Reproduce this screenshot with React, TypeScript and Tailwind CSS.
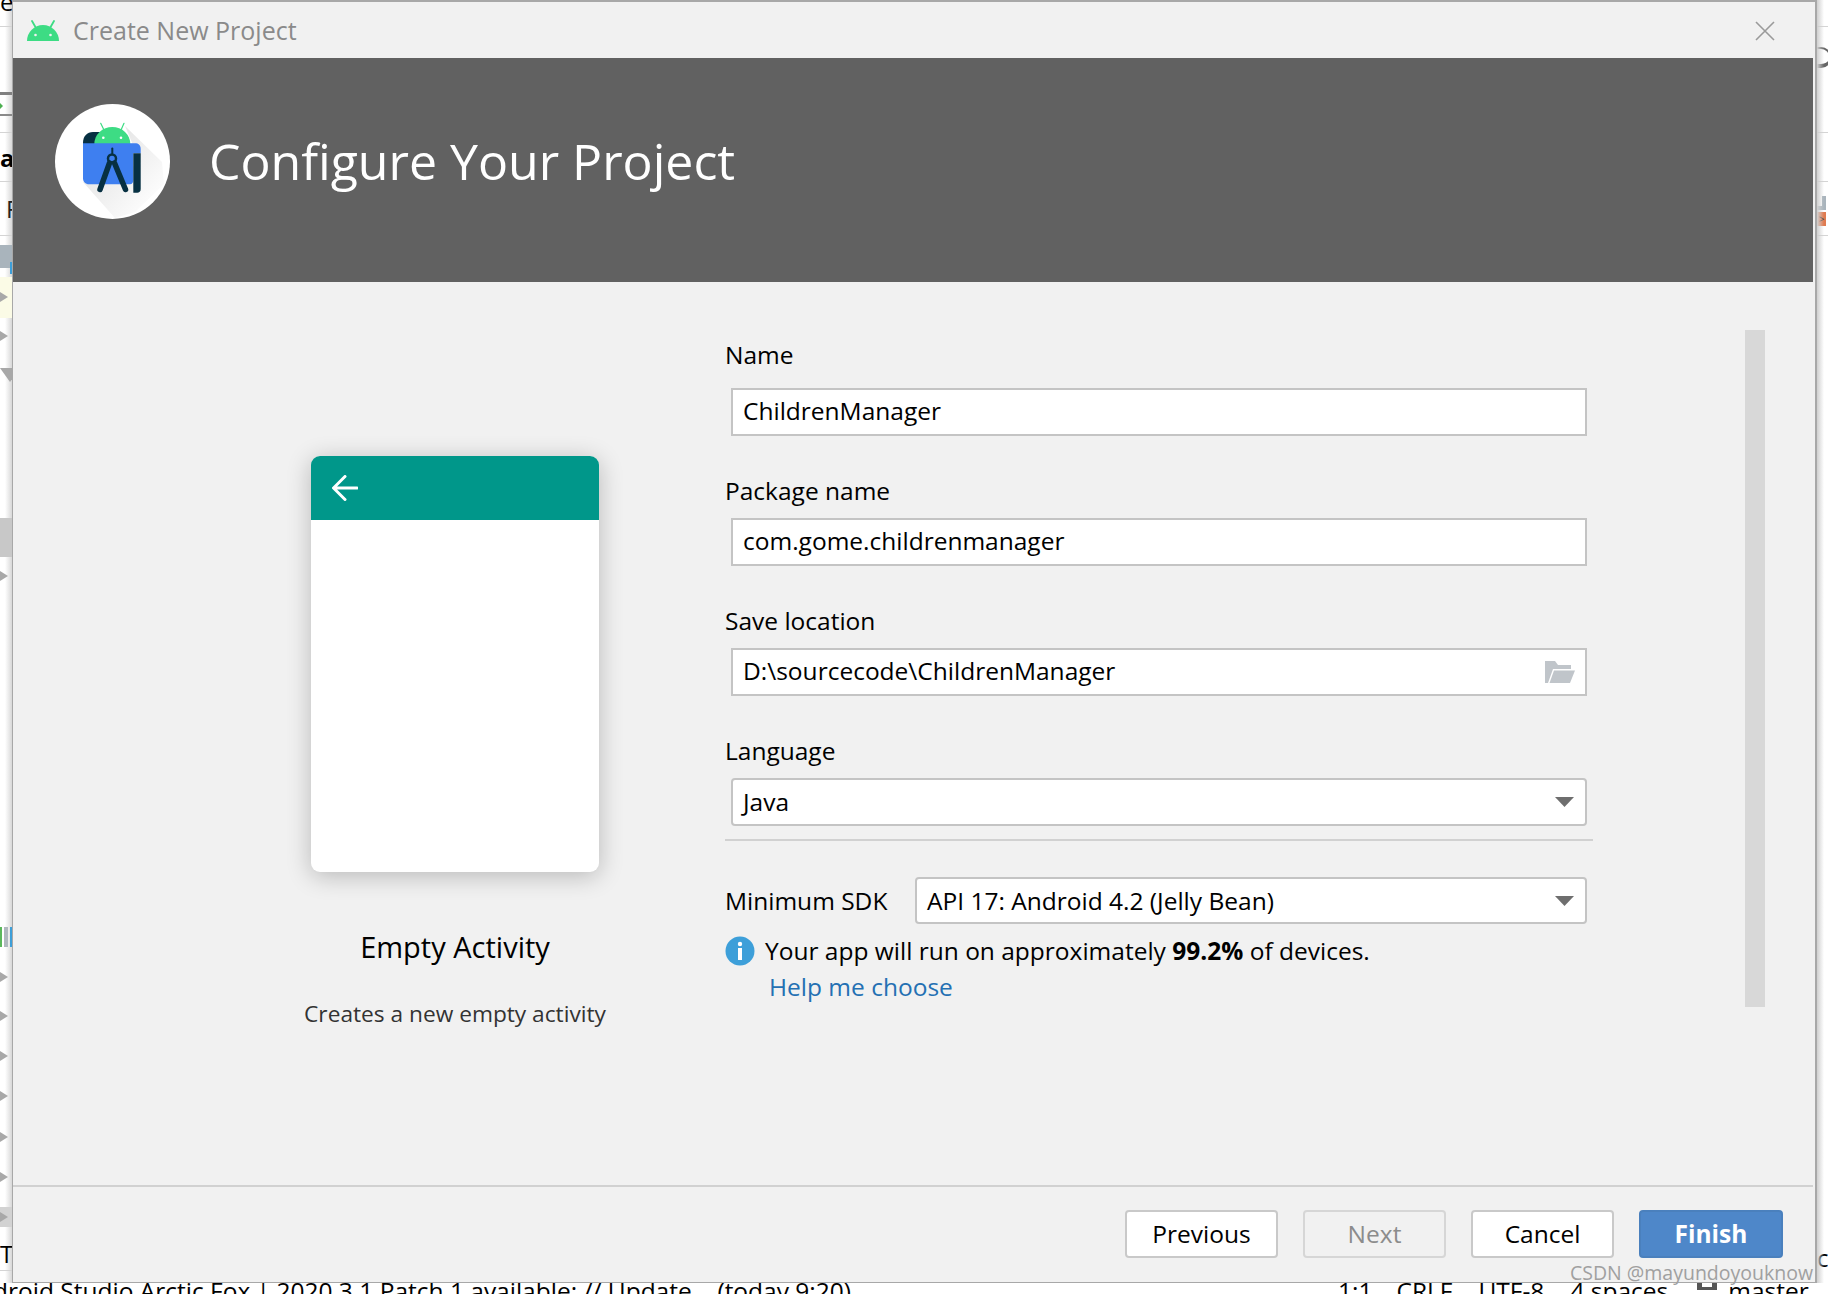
const font = "font-['Open_Sans','Noto_Sans',sans-serif]";

function AndroidHead() {
    return (
        <svg width="34" height="22" viewBox="0 0 34 22" className="shrink-0">
            <path d="M1 21a16 16 0 0 1 32 0z" fill="#3ddc84" />
            <path d="M6 1l4 7M28 1l-4 7" stroke="#3ddc84" strokeWidth="1.8" strokeLinecap="round" />
            <circle cx="9.5" cy="15" r="1.3" fill="#f1f1f1" />
            <circle cx="24.5" cy="15" r="1.3" fill="#f1f1f1" />
        </svg>
    );
}

function StudioLogo() {
    return (
        <svg width="115" height="115" viewBox="0 0 115 115" className="shrink-0">
            <defs>
                <linearGradient id="longShadow" x1="0.2" y1="0.2" x2="0.9" y2="0.9">
                    <stop offset="0" stopColor="#d8d8d8" />
                    <stop offset="1" stopColor="#ffffff" />
                </linearGradient>
            </defs>
            <circle cx="57.5" cy="57.5" r="57.5" fill="#ffffff" />
            <path d="M70 22L107 58L109 80L80 108L60 114L28 78L86 60z" fill="url(#longShadow)" opacity="0.7" />
            <path d="M28 39c0-7 4-11 10-11h10v14H28z" fill="#073042" />
            <path d="M39.3 40a18 17 0 0 1 36 0z" fill="#3ddc84" />
            <path d="M45.7 19.3l3.3 6.7M69 19.3l-3 6.7" stroke="#3ddc84" strokeWidth="1.2" strokeLinecap="round" />
            <circle cx="48.3" cy="33.7" r="1.3" fill="#ffffff" />
            <circle cx="66" cy="33.7" r="1.3" fill="#ffffff" />
            <path d="M28 39.3h52c3.500 0 5.700 2 5.700 5.500v4.500H78.300V76c0 2.500-1 4.300-3.500 4.300H34c-3.500 0-6-2.500-6-6z" fill="#3e7ff0" />
            <path d="M78.300 49.300h7.400V85c0 2.500-1.500 3.700-3.500 3.700h-3.900z" fill="#073042" />
            <path d="M57.300 44.500v5" stroke="#073042" strokeWidth="2" strokeLinecap="round" />
            <circle cx="57" cy="54.500" r="4" fill="none" stroke="#073042" strokeWidth="2.500" />
            <path d="M54.500 59L45 85.500M59.500 59L70.500 85.500" stroke="#073042" strokeWidth="5.500" strokeLinecap="round" />
        </svg>
    );
}

function Caret() {
    return (
        <svg width="19" height="10" viewBox="0 0 19 10" className="shrink-0">
            <path d="M0 0h19L9.500 10z" fill="#6e6e6e" />
        </svg>
    );
}

function Field({ label, value, first, icon }: { label: string; value: string; first?: boolean; icon?: boolean }) {
    return (
        <div>
            <div className={first ? 'h-[50px] leading-[34px] text-[24.5px] text-black' : 'box-content h-[44px] pt-[38px] leading-[34px] text-[24.5px] text-black'}>
                {label}
            </div>
            <div className="ml-[6px] flex h-[48px] w-[856px] items-center justify-between border-2 border-[#c4c4c4] bg-white px-[10px] pb-[1px] text-[24.5px] text-black">
                <span>{value}</span>
                {icon && (
                    <svg width="30" height="22" viewBox="0 0 30 22">
                        <path d="M0 0h10l3 4h13v4H8L3 22H0z" fill="#c0c5ca" />
                        <path d="M9 9.500h21L25 22H4.500z" fill="#c0c5ca" />
                    </svg>
                )}
            </div>
        </div>
    );
}

function Button({ label, kind }: { label: string; kind: 'previous' | 'cancel' | 'off' | 'primary' }) {
    const styles = {
        previous: 'w-[153px] border-[#c9c9c9] bg-white text-black',
        cancel: 'w-[143px] border-[#c9c9c9] bg-white text-black',
        off: 'w-[143px] border-[#d6d6d6] bg-[#f1f1f1] text-[#8c8c8c]',
        primary: 'w-[144px] border-[#4a80bd] bg-[#4e87c9] font-bold text-white',
    };
    return (
        <div className={`flex h-[48px] items-center justify-center rounded-[4px] border-2 text-[24.5px] ${styles[kind]}`}>
            {label}
        </div>
    );
}

function Tri({ top }: { top: string }) {
    return <div className={`absolute left-0 h-0 w-0 border-y-[5px] border-l-[8px] border-y-transparent border-l-[#a8a8a8] ${top}`} />;
}

function LeftStrip() {
    return (
        <div className="relative w-[12px] shrink-0 overflow-hidden bg-white text-black">
            <div className="absolute right-0 top-0 h-full w-[7px] bg-gradient-to-r from-transparent to-[#d8d8d8]" />
            <div className="absolute left-0 top-[-16px] text-[24px]">e</div>
            <div className="absolute left-0 top-[26px] h-px w-full bg-[#d4d4d4]" />
            <div className="absolute left-0 top-[92px] h-[3px] w-full bg-[#808080]" />
            <div className="absolute left-0 top-[103px] h-0 w-0 border-y-[3px] border-l-[3px] border-y-transparent border-l-[#4caf50]" />
            <div className="absolute left-0 top-[114px] h-[2px] w-full bg-[#8a8a8a]" />
            <div className="absolute left-0 top-[132px] h-px w-full bg-[#d4d4d4]" />
            <div className="absolute left-0 top-[140px] text-[24px] font-bold">a</div>
            <div className="absolute left-0 top-[181px] h-px w-full bg-[#d4d4d4]" />
            <div className="absolute left-[6px] top-[191px] text-[24px] text-[#222222]">F</div>
            <div className="absolute left-0 top-[235px] h-px w-full bg-[#d4d4d4]" />
            <div className="absolute left-0 top-[245px] h-[23px] w-full bg-[#a9b4bc]" />
            <div className="absolute left-[10px] top-[262px] h-[12px] w-[2px] bg-[#3d9fd9]" />
            <div className="absolute left-0 top-[277px] h-[41px] w-full bg-[#fbfbe6]" />
            <Tri top="top-[292px]" />
            <Tri top="top-[331px]" />
            <div className="absolute left-0 top-[368px] h-0 w-0 border-x-[10px] border-t-[14px] border-x-transparent border-t-[#a8a8a8]" />
            <div className="absolute left-0 top-[518px] h-[39px] w-full bg-[#c8c8c8]" />
            <Tri top="top-[571px]" />
            <div className="absolute left-0 top-[927px] h-[20px] w-[2px] bg-[#5cb85c]" />
            <div className="absolute left-[4px] top-[927px] h-[20px] w-[4px] bg-[#b0b8be]" />
            <div className="absolute left-[10px] top-[927px] h-[20px] w-[2px] bg-[#3d9fd9]" />
            <Tri top="top-[972px]" />
            <Tri top="top-[1011px]" />
            <Tri top="top-[1051px]" />
            <Tri top="top-[1091px]" />
            <Tri top="top-[1132px]" />
            <Tri top="top-[1172px]" />
            <div className="absolute left-0 top-[1207px] h-[20px] w-full bg-[#d2d2d2]" />
            <Tri top="top-[1212px]" />
            <div className="absolute left-0 top-[1236px] text-[24px]">T</div>
            <div className="absolute left-0 top-[1270px] h-px w-full bg-[#d4d4d4]" />
        </div>
    );
}

function RightStrip() {
    return (
        <div className="relative flex-1 overflow-hidden bg-white text-black">
            <div className="absolute left-0 top-[26px] h-px w-full bg-[#d4d4d4]" />
            <div className="absolute left-0 top-[132px] h-px w-full bg-[#d4d4d4]" />
            <div className="absolute left-0 top-[181px] h-px w-full bg-[#d4d4d4]" />
            <div className="absolute left-0 top-[235px] h-px w-full bg-[#d4d4d4]" />
            <div className="absolute left-0 top-[47px] h-[21px] w-[14px] rounded-r-[10px] border-t-2 border-r-2 border-b-[4px] border-[#666666]" />
            <div className="absolute left-0 top-[196px] h-[14px] w-[9px] border-b-[4px] border-r-[4px] border-[#a9b4bc]" />
            <div className="absolute left-0 top-[212px] flex h-[14px] w-[9px] items-center justify-center bg-[#e07b50] text-[10px] leading-none text-[#333333]">&gt;</div>
            <div className="absolute left-0 top-[1240px] text-[24px]">ct</div>
            <div className="absolute left-0 top-0 h-full w-[7px] bg-gradient-to-r from-[#d0d0d0] to-transparent" />
        </div>
    );
}

export default function App() {
    return (
        <div className={`relative flex h-[1294px] w-[1828px] flex-col overflow-hidden bg-white ${font}`}>
            <div className="flex h-[1283px] shrink-0">
                <LeftStrip />
                {/* dialog */}
                <div className="flex w-[1805px] shrink-0 flex-col border-x-2 border-y-2 border-[#a8a8a8] border-l-[1px] border-b-[1px] bg-[#f1f1f1] pr-[2px]">
                    <div className="flex h-[56px] shrink-0 items-center pl-[13px] pr-[38px] pt-[1px]">
                        <AndroidHead />
                        <span className="ml-[13px] flex-1 text-[25px] text-[#8a8a8a]">Create New Project</span>
                        <svg width="20" height="20" viewBox="0 0 20 20">
                            <path d="M1 1l18 18M19 1L1 19" stroke="#9a9a9a" strokeWidth="1.600" />
                        </svg>
                    </div>
                    <div className="flex h-[224px] shrink-0 items-center bg-[#616161] pb-[18px] pl-[42px]">
                        <StudioLogo />
                        <span className="ml-[39px] text-[50px] text-white">Configure Your Project</span>
                    </div>
                    <div className="flex h-[905px] shrink-0 border-b-2 border-[#d1d1d1]">
                        <div className="flex w-[712px] shrink-0 pl-[298px]">
                            <div className="flex w-[288px] flex-col items-center pt-[174px]">
                                <div className="h-[416px] w-[288px] shrink-0 overflow-hidden rounded-[9px] bg-white shadow-[0_4px_24px_rgba(0,0,0,0.24)]">
                                    <div className="flex h-[64px] items-center bg-[#00978a] pl-[21px]">
                                        <svg width="26" height="26" viewBox="0 0 26 26">
                                            <path d="M25 13H2M13 1.500L1.500 13L13 24.500" fill="none" stroke="#ffffff" strokeWidth="3" strokeLinecap="round" />
                                        </svg>
                                    </div>
                                </div>
                                <div className="mt-[55px] whitespace-nowrap text-[29px] leading-[40px] text-black">Empty Activity</div>
                                <div className="mt-[32px] whitespace-nowrap text-[22.7px] leading-[30px] text-[#333333]">Creates a new empty activity</div>
                            </div>
                        </div>
                        <div className="w-[868px] shrink-0 pt-[56px]">
                            <Field label="Name" value="ChildrenManager" first />
                            <Field label="Package name" value="com.gome.childrenmanager" />
                            <Field label="Save location" value="D:\sourcecode\ChildrenManager" icon />
                            <div className="box-content h-[44px] pt-[38px] text-[24.5px] leading-[34px] text-black">Language</div>
                            <div className="ml-[6px] flex h-[48px] w-[856px] items-center justify-between rounded-[4px] border-2 border-[#c4c4c4] bg-white pl-[10px] pr-[11px] text-[24.5px] text-black">
                                <span>Java</span>
                                <Caret />
                            </div>
                            <div className="mt-[13px] h-[2px] bg-[#d1d1d1]" />
                            <div className="mt-[36px] flex items-center">
                                <span className="w-[190px] shrink-0 text-[24.5px] leading-[34px] text-black">Minimum SDK</span>
                                <div className="flex h-[47px] w-[672px] items-center justify-between rounded-[4px] border-2 border-[#c4c4c4] bg-white pl-[10px] pr-[11px] text-[24.5px] text-black">
                                    <span className="pt-[1px]">API 17: Android 4.2 (Jelly Bean)</span>
                                    <Caret />
                                </div>
                            </div>
                            <div className="mt-[10px] flex items-center">
                                <svg width="30" height="30" viewBox="0 0 30 30" className="shrink-0">
                                    <circle cx="15" cy="15" r="14.500" fill="#3d9fd9" />
                                    <circle cx="15" cy="8" r="2.200" fill="#ffffff" />
                                    <rect x="13" y="12" width="4" height="12" fill="#ffffff" />
                                </svg>
                                <span className="ml-[10px] text-[24.5px] leading-[34px] text-black">
                                    Your app will run on approximately <b>99.2%</b> of devices.
                                </span>
                            </div>
                            <div className="ml-[44px] mt-[2px] text-[24.5px] leading-[34px] text-[#2470b3]">Help me choose</div>
                        </div>
                        <div className="ml-[152px] mt-[48px] h-[677px] w-[20px] bg-[#d8d8d8]" />
                    </div>
                    <div className="flex flex-1 justify-end gap-[25px] pr-[30px] pt-[23px]">
                        <Button label="Previous" kind="previous" />
                        <Button label="Next" kind="off" />
                        <Button label="Cancel" kind="cancel" />
                        <Button label="Finish" kind="primary" />
                    </div>
                </div>
                <RightStrip />
            </div>
            {/* status bar peeking out under the dialog */}
            <div className="relative h-[11px] shrink-0 overflow-hidden bg-white text-[24.5px] leading-[34px] text-black">
                <div className="-mt-[9px] flex">
                    <span className="ml-[-7px] whitespace-nowrap">droid Studio Arctic Fox | 2020.3.1 Patch 1 available: // Update... (today 9:20)</span>
                    <span className="ml-[487px] whitespace-nowrap">1:1</span>
                    <span className="ml-[24px] whitespace-nowrap">CRLF</span>
                    <span className="ml-[26px] whitespace-nowrap">UTF-8</span>
                    <span className="ml-[26px] whitespace-nowrap">4 spaces</span>
                    <span className="ml-[29px] mt-[8px] h-[8px] w-[20px] shrink-0 border-x-[5px] border-b-[3px] border-[#555555]" />
                    <span className="ml-[11px] whitespace-nowrap">master</span>
                </div>
            </div>
            <div className="absolute bottom-[8px] right-[15px] text-[19.5px] leading-[26px] text-[#a0a0a0]">CSDN @mayundoyouknow</div>
        </div>
    );
}
